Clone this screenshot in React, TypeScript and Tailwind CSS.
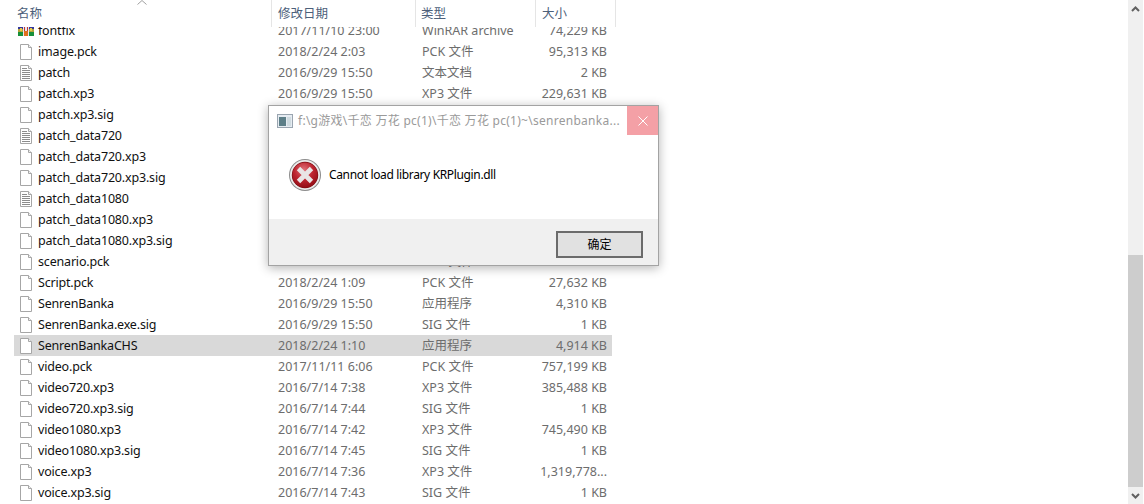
/**
 * Explorer file list with a "Cannot load library" error dialog on top
 */
import type { ReactNode } from 'react';

type Kind = 'rar' | 'file' | 'text';

interface FileRow {
  name: string;
  date: string;
  type: string;
  size: string;
  kind?: Kind;
  selected?: boolean;
}

const rows: FileRow[] = [
  { name: 'fontfix', date: '2017/11/10 23:00', type: 'WinRAR archive', size: '74,229 KB', kind: 'rar' },
  { name: 'image.pck', date: '2018/2/24 2:03', type: 'PCK 文件', size: '95,313 KB' },
  { name: 'patch', date: '2016/9/29 15:50', type: '文本文档', size: '2 KB', kind: 'text' },
  { name: 'patch.xp3', date: '2016/9/29 15:50', type: 'XP3 文件', size: '229,631 KB' },
  { name: 'patch.xp3.sig', date: '2016/9/29 15:50', type: 'SIG 文件', size: '1 KB' },
  { name: 'patch_data720', date: '2016/9/29 15:50', type: '文本文档', size: '1 KB', kind: 'text' },
  { name: 'patch_data720.xp3', date: '2016/9/29 15:50', type: 'XP3 文件', size: '1 KB' },
  { name: 'patch_data720.xp3.sig', date: '2016/9/29 15:50', type: 'SIG 文件', size: '1 KB' },
  { name: 'patch_data1080', date: '2016/9/29 15:50', type: '文本文档', size: '1 KB', kind: 'text' },
  { name: 'patch_data1080.xp3', date: '2016/9/29 15:50', type: 'XP3 文件', size: '1 KB' },
  { name: 'patch_data1080.xp3.sig', date: '2016/9/29 15:50', type: 'SIG 文件', size: '1 KB' },
  { name: 'scenario.pck', date: '2018/2/24 1:09', type: 'PCK 文件', size: '1 KB' },
  { name: 'Script.pck', date: '2018/2/24 1:09', type: 'PCK 文件', size: '27,632 KB' },
  { name: 'SenrenBanka', date: '2016/9/29 15:50', type: '应用程序', size: '4,310 KB' },
  { name: 'SenrenBanka.exe.sig', date: '2016/9/29 15:50', type: 'SIG 文件', size: '1 KB' },
  { name: 'SenrenBankaCHS', date: '2018/2/24 1:10', type: '应用程序', size: '4,914 KB', selected: true },
  { name: 'video.pck', date: '2017/11/11 6:06', type: 'PCK 文件', size: '757,199 KB' },
  { name: 'video720.xp3', date: '2016/7/14 7:38', type: 'XP3 文件', size: '385,488 KB' },
  { name: 'video720.xp3.sig', date: '2016/7/14 7:44', type: 'SIG 文件', size: '1 KB' },
  { name: 'video1080.xp3', date: '2016/7/14 7:42', type: 'XP3 文件', size: '745,490 KB' },
  { name: 'video1080.xp3.sig', date: '2016/7/14 7:45', type: 'SIG 文件', size: '1 KB' },
  { name: 'voice.xp3', date: '2016/7/14 7:36', type: 'XP3 文件', size: '1,319,778...' },
  { name: 'voice.xp3.sig', date: '2016/7/14 7:43', type: 'SIG 文件', size: '1 KB' },
];

function FileIcon({ kind = 'file' }: { kind?: Kind }) {
  if (kind === 'rar') {
    return (
      <svg width="16" height="16" viewBox="0 0 16 16" className="block">
        <rect x="0" y="3" width="16" height="3" fill="#34389c" />
        <rect x="0" y="6" width="16" height="3" fill="#b3a23a" />
        <rect x="0" y="9" width="16" height="4" fill="#17903a" />
        <rect x="5" y="3" width="6" height="10" fill="#e8e4f0" />
        <rect x="6" y="4" width="1" height="4" fill="#c0392b" />
        <rect x="9" y="4" width="1" height="4" fill="#c0392b" />
        <rect x="6" y="8" width="4" height="5" fill="#e0701e" />
        <rect x="2" y="5" width="2" height="3" fill="#e8c94a" />
        <rect x="12" y="5" width="2" height="3" fill="#e8c94a" />
      </svg>
    );
  }
  return (
    <svg width="16" height="16" viewBox="0 0 16 16" className="block">
      <path d="M2.5 0.5h8l3 3v12h-11z" fill="#fff" stroke="#a6a6a6" />
      <path d="M10.5 0.5v3h3" fill="#f2f2f2" stroke="#a6a6a6" />
      {kind === 'text' && (
        <path d="M4 3.5h5M4 5.5h8M4 7.5h8M4 9.5h8M4 11.5h8M4 13.5h8" stroke="#8c8c8c" fill="none" />
      )}
    </svg>
  );
}

function HeaderCell({ width, children }: { width: string; children: ReactNode }) {
  return (
    <div className={`${width} h-full pt-[2px] border-r border-[#e5e5e5] text-[#4c607a] flex items-center`}>
      {children}
    </div>
  );
}

function ErrorIcon() {
  return (
    <svg width="32" height="32" viewBox="0 0 32 32" className="block">
      <defs>
        <radialGradient id="errFill" cx="45%" cy="30%" r="75%">
          <stop offset="0%" stopColor="#e0737a" />
          <stop offset="50%" stopColor="#bd2530" />
          <stop offset="100%" stopColor="#8e0a12" />
        </radialGradient>
      </defs>
      <circle cx="16" cy="16" r="16" fill="#8c8c8c" />
      <circle cx="16" cy="16" r="15" fill="#ececec" />
      <circle cx="16" cy="16" r="13.2" fill="#7d0d12" />
      <circle cx="16" cy="16" r="12.6" fill="url(#errFill)" />
      <path d="M9.5 9.5l13 13M22.5 9.5l-13 13" stroke="#e9e5e5" strokeWidth="4.8" />
    </svg>
  );
}

function ErrorDialog() {
  return (
    <div className="absolute left-[268px] top-[105px] w-[391px] h-[161px] bg-white border border-[#a3a3a3] shadow-[0_2px_10px_rgba(0,0,0,0.3)] flex flex-col">
      {/* Barra de título inactiva */}
      <div className="h-[29px] flex items-center justify-between">
        <div className="flex items-center pl-[8px] gap-[5px] text-[#9a9a9a] text-[12px] tracking-[0.27px] whitespace-nowrap">
          <svg width="16" height="14" viewBox="0 0 16 14" className="block">
            <rect x="0.5" y="0.5" width="15" height="13" fill="#e6ecf2" stroke="#9aa5b0" />
            <rect x="2" y="3" width="7" height="9" fill="#5d7f88" />
            <rect x="10" y="3" width="4" height="9" fill="#cfdbe0" />
          </svg>
          <span>f:\g游戏\千恋 万花 pc(1)\千恋 万花 pc(1)~\senrenbanka...</span>
        </div>
        <div className="w-[31px] h-full bg-[#f4a0a6] flex items-center justify-center">
          <svg width="10" height="10" viewBox="0 0 10 10">
            <path d="M0.5 0.5l9 9M9.5 0.5l-9 9" stroke="#fff" fill="none" />
          </svg>
        </div>
      </div>
      <div className="flex-1 flex items-center pl-[20px] gap-[8px] pb-[4px] text-[12px] tracking-[-0.35px] text-black">
        <ErrorIcon />
        <span>Cannot load library KRPlugin.dll</span>
      </div>
      <div className="h-[46px] bg-[#f0f0f0] flex items-start justify-end pt-[12px] pr-[15px]">
        <div className="w-[87px] h-[27px] bg-[#e1e1e1] border-2 border-[#6b6b6b] flex items-center justify-center text-[12px] text-black">
          确定
        </div>
      </div>
    </div>
  );
}

export default function App() {
  return (
    <div className="relative w-[1144px] h-[504px] overflow-hidden bg-white flex text-[12.5px] font-['Noto_Sans','Noto_Sans_CJK_SC',sans-serif]">
      <div className="flex-1 min-w-0 flex flex-col">
        {/* Encabezado de columnas */}
        <div className="relative z-10 h-[27px] shrink-0 bg-white flex">
          <HeaderCell width="w-[272px] pl-[17px]">名称</HeaderCell>
          <HeaderCell width="w-[144px] pl-[6px]">修改日期</HeaderCell>
          <HeaderCell width="w-[120px] pl-[5px]">类型</HeaderCell>
          <HeaderCell width="w-[80px] pl-[6px]">大小</HeaderCell>
          <svg width="10" height="5" viewBox="0 0 10 5" className="absolute left-[137px] top-0">
            <path d="M0.5 4.5l4.5-4 4.5 4" stroke="#a0a0a0" fill="none" />
          </svg>
        </div>
        {/* Filas de archivos */}
        <div className="-mt-[7px] pl-[14px]">
          {rows.map((row) => (
            <div
              key={row.name}
              className={`w-[598px] h-[21px] flex items-center ${row.selected ? 'bg-[#d9d9d9]' : ''}`}
            >
              <div className="w-[257px] flex items-center gap-[4px] pl-[4px] text-[#111111]">
                <FileIcon kind={row.kind} />
                <span className="pt-[2px] tracking-[-0.18px]">{row.name}</span>
              </div>
              <div className="w-[144px] pt-[2px] pl-[7px] text-[#6d6d6d]">{row.date}</div>
              <div className="w-[110px] pt-[2px] pl-[7px] text-[#6d6d6d] whitespace-nowrap">{row.type}</div>
              <div className="w-[82px] pt-[2px] text-right text-[#6d6d6d] whitespace-nowrap">{row.size}</div>
            </div>
          ))}
        </div>
      </div>
      {/* Barra de desplazamiento */}
      <div className="w-[16px] shrink-0 pr-px flex flex-col">
        <div className="h-[17px] bg-[#f0f0f0] flex items-center justify-center">
          <svg width="9" height="6" viewBox="0 0 9 6">
            <path d="M1 5l3.5-3.5L8 5" stroke="#606060" strokeWidth="2" fill="none" />
          </svg>
        </div>
        <div className="flex-1 bg-[#f0f0f0]" />
        <div className="h-[232px] bg-[#cdcdcd]" />
        <div className="h-[17px] bg-[#f0f0f0] flex items-center justify-center">
          <svg width="9" height="6" viewBox="0 0 9 6">
            <path d="M1 1l3.5 3.5L8 1" stroke="#606060" strokeWidth="2" fill="none" />
          </svg>
        </div>
      </div>
      <ErrorDialog />
    </div>
  );
}
